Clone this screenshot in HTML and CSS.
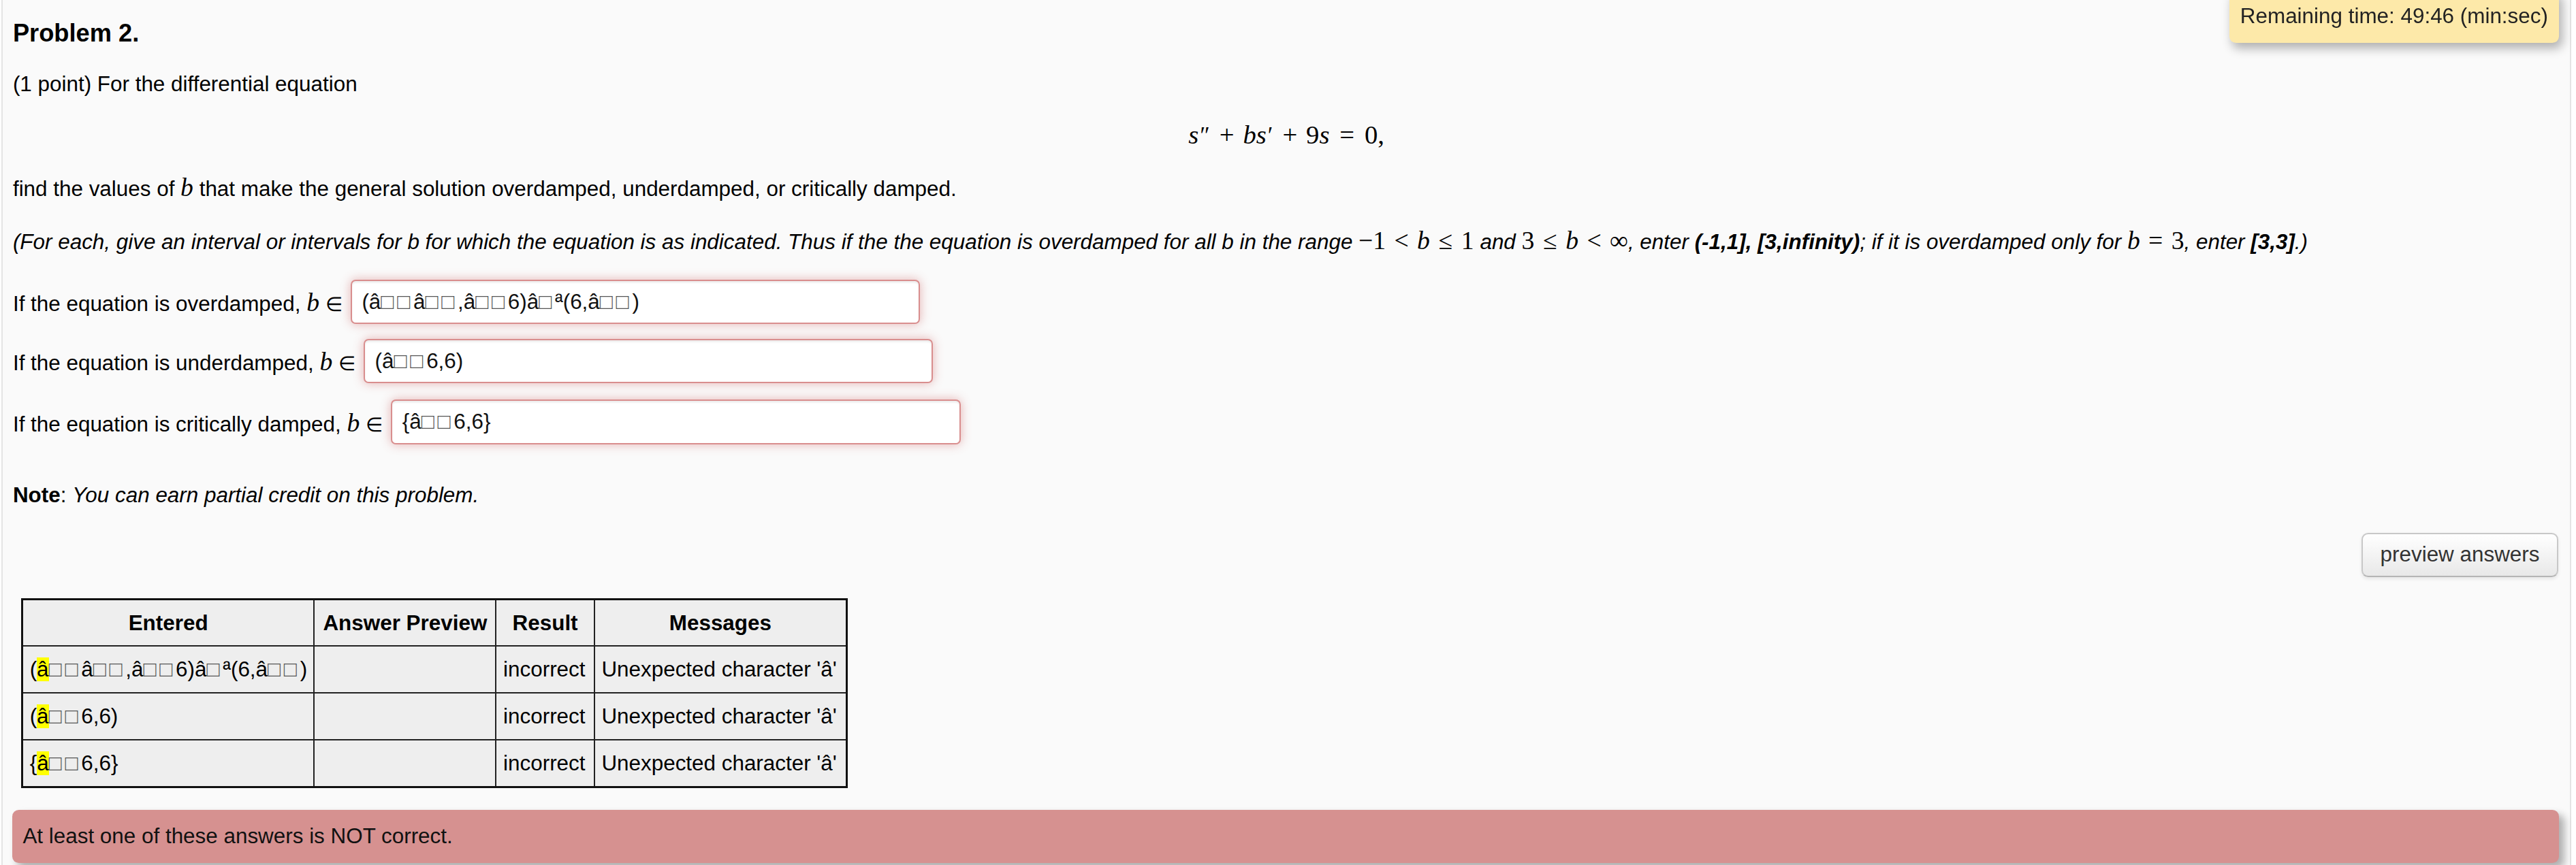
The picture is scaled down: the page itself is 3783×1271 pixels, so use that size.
FILE: index.html
```html
<!DOCTYPE html>
<html lang="en">
<head>
<meta charset="utf-8">
<title>Problem 2</title>
<link rel="stylesheet" href="styles.css">
</head>
<body>
<div class="timer">Remaining time: 49:46 (min:sec)</div>
<div class="page">
  <h3 class="title">Problem 2.</h3>
  <p class="p1">(1 point) For the differential equation</p>
  <div class="display-math"><span class="m"><i>s</i><span class="pr">″</span><span class="bin">+</span><i>b</i><i>s</i><span class="pr">′</span><span class="bin">+</span>9<i>s</i><span class="rel">=</span>0<span class="comma">,</span></span></div>
  <p class="p2">find the values of <span class="m"><i>b</i></span> that make the general solution overdamped, underdamped, or critically damped.</p>
  <p class="p3"><em>(For each, give an interval or intervals for b for which the equation is as indicated. Thus if the the equation is overdamped for all b in the range <span class="m">−1<span class="rel">&lt;</span><i>b</i><span class="rel">≤</span>1</span> and <span class="m">3<span class="rel">≤</span><i>b</i><span class="rel">&lt;</span>∞</span>, enter <b>(-1,1], [3,infinity)</b>; if it is overdamped only for <span class="m"><i>b</i><span class="rel">=</span>3</span>, enter <b>[3,3]</b>.)</em></p>

  <div class="ans-row r1">
    <span class="lbl">If the equation is overdamped, <span class="m"><i>b</i><span class="in">∈</span></span></span>
    <div class="ans" role="textbox">(â<span class="tofu">□□</span>â<span class="tofu">□□</span>,â<span class="tofu">□□</span>6)â<span class="tofu">□</span>ª(6,â<span class="tofu">□□</span>)</div>
  </div>
  <div class="ans-row r2">
    <span class="lbl">If the equation is underdamped, <span class="m"><i>b</i><span class="in">∈</span></span></span>
    <div class="ans" role="textbox">(â<span class="tofu">□□</span>6,6)</div>
  </div>
  <div class="ans-row r3">
    <span class="lbl">If the equation is critically damped, <span class="m"><i>b</i><span class="in">∈</span></span></span>
    <div class="ans" role="textbox">{â<span class="tofu">□□</span>6,6}</div>
  </div>

  <p class="note"><b>Note</b>: <em>You can earn partial credit on this problem.</em></p>

  <div class="btn-row"><button class="btn" type="button">preview answers</button></div>

  <table class="attempts">
    <colgroup>
      <col class="c-entered"><col class="c-preview"><col class="c-result"><col class="c-msg">
    </colgroup>
    <thead>
      <tr><th>Entered</th><th>Answer Preview</th><th>Result</th><th>Messages</th></tr>
    </thead>
    <tbody>
      <tr><td>(<mark>â</mark><span class="tofu">□□</span>â<span class="tofu">□□</span>,â<span class="tofu">□□</span>6)â<span class="tofu">□</span>ª(6,â<span class="tofu">□□</span>)</td><td></td><td>incorrect</td><td>Unexpected character 'â'</td></tr>
      <tr><td>(<mark>â</mark><span class="tofu">□□</span>6,6)</td><td></td><td>incorrect</td><td>Unexpected character 'â'</td></tr>
      <tr><td>{<mark>â</mark><span class="tofu">□□</span>6,6}</td><td></td><td>incorrect</td><td>Unexpected character 'â'</td></tr>
    </tbody>
  </table>

  <div class="alert">At least one of these answers is NOT correct.</div>
</div>
</body>
</html>
```
FILE: styles.css
```css
html {
  zoom: 2.4173;
  height: 100%;
  background: #ffffff;
}
body {
  margin: 0;
  height: 100%;
  font-family: "Liberation Sans", Arial, sans-serif;
  font-size: 13px;
  line-height: 18px;
  color: #000;
}
.page {
  box-sizing: border-box;
  min-height: 100%;
  margin: 0 3px 0 1px;
  border-left: 1px solid #e4e4e4;
  border-right: 1px solid #e4e4e4;
  background: #fafafa;
  padding: 11px 6px 0 6px;
  display: flex;
  flex-direction: column;
}
.timer {
  position: fixed;
  top: -6px;
  right: 10.5px;
  padding: 7px 6.5px;
  background: #fde9a9;
  color: #222;
  border-radius: 4px;
  box-shadow: 2px 3px 6px rgba(0, 0, 0, 0.3);
  line-height: 18px;
  z-index: 5;
}
.title {
  margin: 0;
  font-size: 15px;
  font-weight: bold;
  line-height: 18px;
}
p { margin: 0; }
.p1 { margin-top: 13px; }
.display-math {
  margin-top: 14px;
  height: 18px;
  text-align: center;
  line-height: 18px;
}
.p2 { margin-top: 14px; }
.p3 { margin-top: 14px; white-space: nowrap; }

.m {
  font-family: "Liberation Serif", "Times New Roman", serif;
  font-size: 1.2em;
  font-style: normal;
  font-weight: normal;
  line-height: 1;
  white-space: nowrap;
}
.m i { font-style: italic; }
.m .bin,
.m .rel {
  display: inline-block;
  width: 0.778em;
  text-align: center;
}
.m .bin { margin: 0 0.222em; }
.m .rel { margin: 0 0.278em; }
.p3 .m .rel { margin: 0 0.22em; }
.m .in {
  display: inline-block;
  font-size: 0.78em;
  margin-left: 0.3em;
}
.m .pr { font-size: 0.9em; margin-left: 0.06em; margin-right: 0.04em; }
.display-math .m { font-size: 16px; }

.ans-row {
  display: flex;
  align-items: center;
  height: 27px;
}
.r1 { margin-top: 14px; }
.r2 { margin-top: 9px; }
.r3 { margin-top: 10px; }
.lbl {
  white-space: nowrap;
  padding-top: 3px;
}
.ans {
  box-sizing: border-box;
  width: 346px;
  height: 27px;
  margin-left: 5px;
  padding: 4px 6px;
  line-height: 17px;
  font-size: 13px;
  color: #111;
  background: #fff;
  border: 1px solid #d98e8e;
  border-radius: 3px;
  box-shadow: inset 0 1px 1px rgba(0, 0, 0, 0.075), 0 0 6px rgba(205, 90, 90, 0.45);
  white-space: nowrap;
  overflow: hidden;
}
.tofu {
  color: #555;
  letter-spacing: 2px;
}
.note { margin-top: 22px; }

.btn-row {
  margin-top: 14px;
  display: flex;
  justify-content: flex-end;
}
.btn {
  box-sizing: border-box;
  height: 26.7px;
  margin-right: 1px;
  padding: 0 10.5px;
  font-family: "Liberation Sans", Arial, sans-serif;
  font-size: 13px;
  color: #333;
  background: linear-gradient(#ffffff, #e8e8e8);
  border: 1px solid #c8c8c8;
  border-bottom-color: #b5b5b5;
  border-radius: 4px;
  box-shadow: inset 0 1px 0 rgba(255, 255, 255, 0.2), 0 1px 2px rgba(0, 0, 0, 0.08);
}

.attempts {
  margin-top: 13px;
  margin-left: 5px;
  width: 501px;
  table-layout: fixed;
  border-collapse: collapse;
  border: 1.5px solid #111;
}
.c-entered { width: 177.4px; }
.c-preview { width: 110.5px; }
.c-result { width: 59.7px; }
.c-msg { width: 153.4px; }
.attempts tr { height: 28.5px; }
.attempts th,
.attempts td {
  border: 1px solid #222;
  background: #eeeeee;
  padding: 0 4px;
  vertical-align: middle;
  white-space: nowrap;
  overflow: hidden;
}
.attempts th { text-align: center; font-weight: bold; }
.attempts td { text-align: left; }
mark { background: #ffff00; color: #000; }

.alert {
  margin-top: 13.5px;
  margin-left: -0.5px;
  margin-right: 0.5px;
  padding: 7px 6.5px;
  line-height: 18px;
  background: #d69190;
  color: #111;
  border-radius: 4px;
  box-shadow: 3px 3px 5px rgba(0, 0, 0, 0.3);
}
```
